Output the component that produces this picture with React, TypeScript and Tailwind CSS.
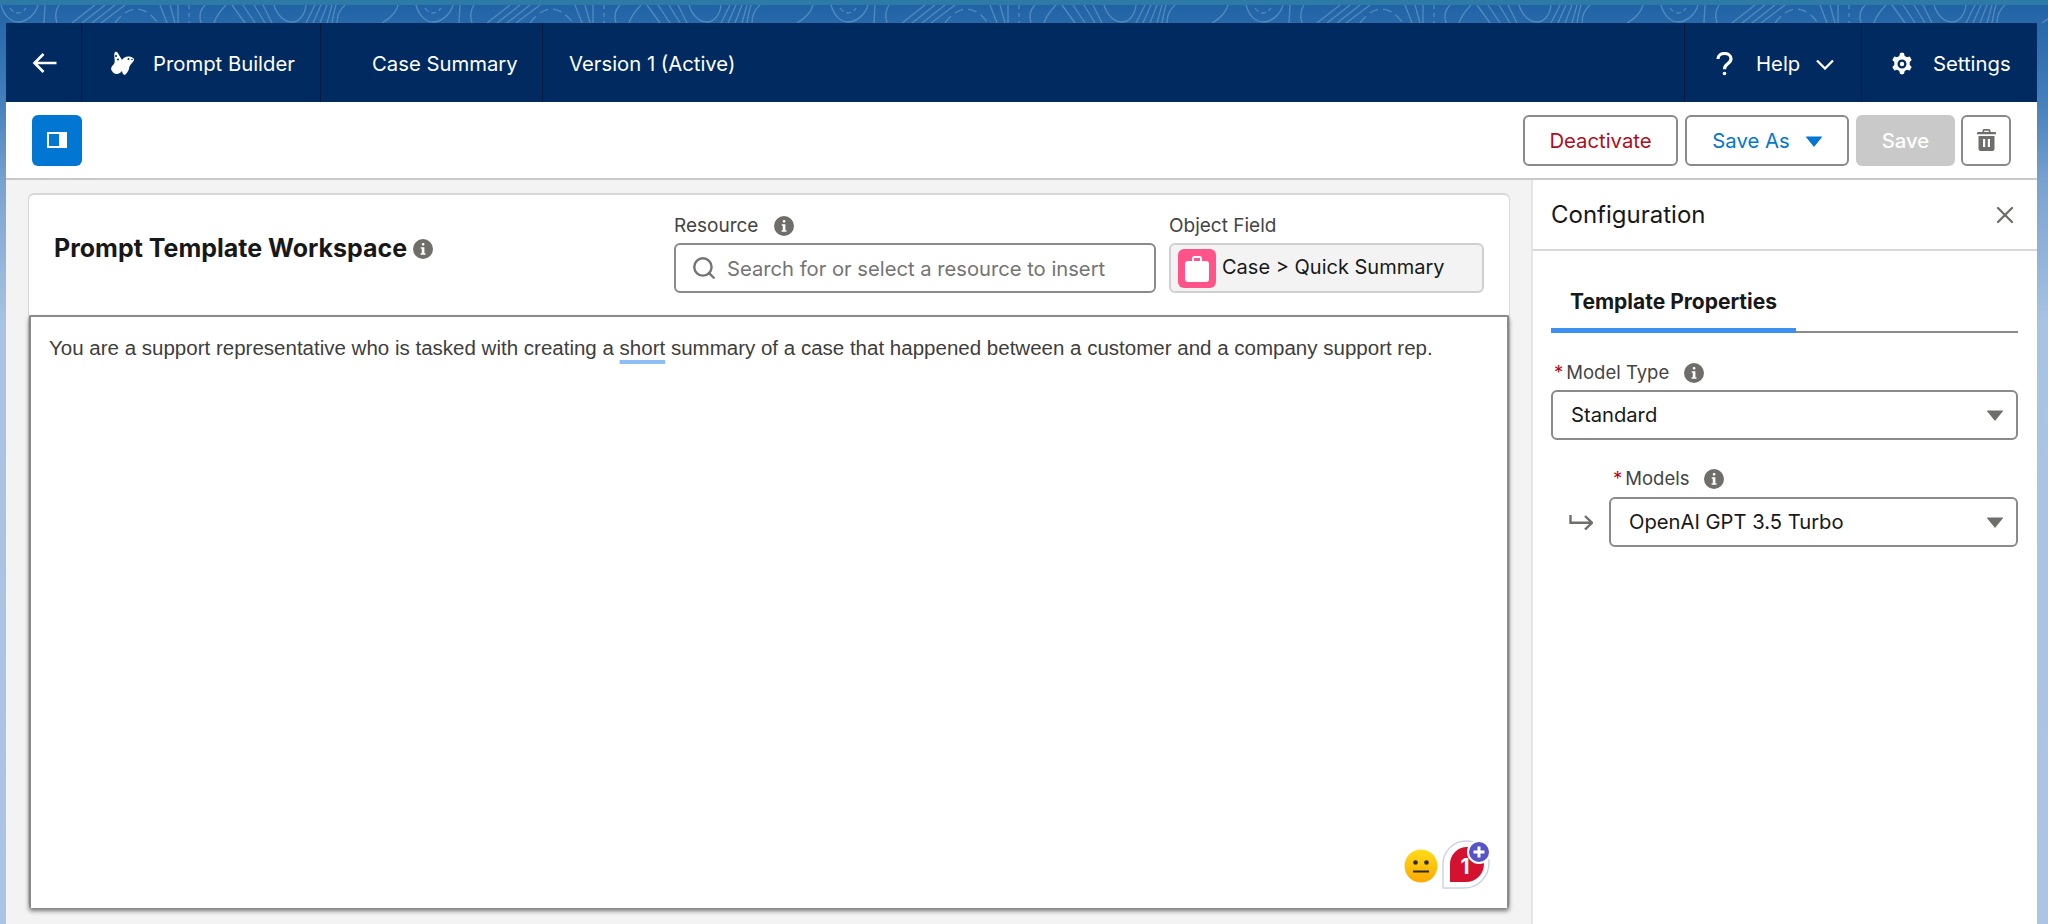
import React from 'react';
import { Search, X } from 'lucide-react';

const sans = 'font-["Inter","Noto_Sans",sans-serif]';

const InfoIcon = ({ size = 20 }: { size?: number }) => (
  <svg width={size} height={size} viewBox="0 0 20 20" className="shrink-0">
    <circle cx="10" cy="10" r="10" fill="#706e6b" />
    <rect x="8.8" y="4" width="2.6" height="2.6" rx="1" fill="#fff" />
    <path d="M7.8 8.2h3.6v6h1.1v1.6H7.6v-1.600h1.200V9.800h-1z" fill="#fff" />
  </svg>
);

const Caret = ({ color = '#706e6b' }: { color?: string }) => (
  <svg width="16" height="11" viewBox="0 0 16 11" className="shrink-0">
    <path d="M0.5 0.5h15a.5.5 0 0 1 .4.8L8.4 10.4a.5.5 0 0 1-.8 0L.1 1.3A.5.5 0 0 1 .5.5z" fill={color} />
  </svg>
);

const Butterfly = () => (
  <svg width="26" height="26" viewBox="0 0 26 26" className="shrink-0">
    <path
      d="M5 1C7 0 8 2 9 4l3 5c2-3 6-5 11-2 2 1 1 3-1 5-2 2-3 4-3 6-1 3-3 5-4 6-2 0-3-3-3-4-3 4-8 4-10 0-2-3 0-5 2-7C6 10 3 4 5 1z"
      fill="#fff"
    />
    <circle cx="6" cy="5" r="1" fill="#002a60" />
    <circle cx="8" cy="8.500" r="1" fill="#002a60" />
    <circle cx="18.500" cy="8" r="1" fill="#002a60" />
    <circle cx="22" cy="8.500" r="0.800" fill="#002a60" />
  </svg>
);

const Gear = () => (
  <svg width="24" height="24" viewBox="0 0 24 24" className="shrink-0">
    <path
      fillRule="evenodd"
      d="M12 0.500l2 .8 .7 2.700 2.300 1.300 2.700-.7 2 3.400-2 2v3l2 2-2 3.400-2.700-.7-2.300 1.300-.7 2.700-2 .8-2-.8-.7-2.700-2.300-1.300-2.700.7-2-3.400 2-2v-3l-2-2 2-3.400 2.700.7 2.300-1.300.7-2.700zM12 7.500a4.500 4.500 0 1 0 0 9 4.500 4.500 0 0 0 0-9z"
      fill="#fff"
    />
    <circle cx="12" cy="12" r="2.200" fill="#fff" />
  </svg>
);

const Trash = () => (
  <svg width="19" height="22" viewBox="0 0 19 22">
    <path
      fillRule="evenodd"
      d="M7 0h5a1.500 1.500 0 0 1 1.500 1.500V3H18a1 1 0 0 1 1 1v1.300H0V4a1 1 0 0 1 1-1h4.500V1.500A1.500 1.500 0 0 1 7 0zm.200 1.700V3h4.600V1.700zM1.500 7h16v13a2 2 0 0 1-2 2h-12a2 2 0 0 1-2-2zm4.500 3v8h2.200v-8zm4.800 0v8H13v-8z"
      fill="#706e6b"
    />
  </svg>
);

const Backdrop = () => (
  <svg className="absolute inset-0" width="2048" height="924">
    <defs>
      <linearGradient id="sky" x1="0" y1="0" x2="0" y2="1">
        <stop offset="0" stopColor="#1f62a5" />
        <stop offset="0.1" stopColor="#3f7cb9" />
        <stop offset="0.2" stopColor="#7ba3d0" />
        <stop offset="0.35" stopColor="#a9c3e2" />
        <stop offset="1" stopColor="#adc5e2" />
      </linearGradient>
      <pattern id="topo" width="415" height="60" patternUnits="userSpaceOnUse">
        <g fill="none" stroke="#5a93c4" strokeWidth="1.300" opacity="0.8">
          <path d="M1 5c3 11 10 17 17 17s17-6 20-17" />
          <path d="M10 8c2 3 5 5 8 5s6-2 8-5" strokeDasharray="5 3" />
          <path d="M45 5l-1 18M59 5c-4 6-4 12-2 18" />
          <path d="M72 23L95 5M82 23L105 5M92 23L115 5M101 23L125 5" />
          <path d="M115 23c5-7 13-14 21-14 9 0 16 6 22 14" strokeDasharray="9 5" />
          <path d="M160 5l7 18M170 5l5 18M178 5v18" />
          <path d="M189 5v18" strokeDasharray="4 4" />
          <path d="M205 5c-6 6-6 12-4 18M226 5c-5 5-10 12-12 18" />
          <path d="M232 5l13 18M243 5l12 18M254 5l11 18M263 5l9 18" />
          <path d="M274 5c3 10 10 17 18 17 7 0 13-7 14-17" />
          <path d="M306 23l9-18M313 23l8-18M320 23l7-18M327 23l5-18" />
          <path d="M345 5c-6 5-8 12-8 18M332 23c1-6 2-12 4-18" />
          <path d="M398 5c-2 8-9 14-16 18" />
        </g>
      </pattern>
    </defs>
    <rect width="2048" height="924" fill="url(#sky)" />
    <rect width="2048" height="60" fill="url(#topo)" />
    <rect width="2048" height="5" fill="#2e7aa6" />
  </svg>
);

const NavBar = () => (
  <div className={`flex h-[79px] items-stretch bg-[#002a60] text-[20.3px] text-white ${sans}`}>
    <div className="flex w-[76px] items-center border-r border-[#01183c] pl-[26px] pt-[1px]">
      <svg width="25" height="22" viewBox="0 0 25 22" fill="none" stroke="#fff" strokeWidth="2.600">
        <path d="M24.500 11H2.500M11.500 2l-9 9 9 9" />
      </svg>
    </div>
    <div className="flex w-[239px] items-center border-r border-[#01183c] pl-[28px] pt-[3px]">
      <Butterfly />
      <span className="ml-[17px]">Prompt Builder</span>
    </div>
    <div className="flex w-[222px] items-center border-r border-[#01183c] pl-[51px] pt-[3px]">Case Summary</div>
    <div className="flex flex-1 items-center pl-[26px] pt-[3px]">Version 1 (Active)</div>
    <div className="flex w-[178px] items-center border-x border-[#01183c] pl-[31px] pt-[3px]">
      <svg width="17" height="24" viewBox="0 0 17 24" fill="none" stroke="#fff" strokeWidth="3.200" className="shrink-0">
        <path d="M2 7c0-3.500 3-5.500 6.500-5.500S15 3.500 15 6.800c0 2.800-2 4-3.800 5.400-1.800 1.300-2.700 2.500-2.700 5" />
        <circle cx="8.500" cy="21.500" r="1.800" fill="#fff" stroke="none" />
      </svg>
      <span className="ml-[23px]">Help</span>
      <svg width="18" height="11" viewBox="0 0 18 11" fill="none" stroke="#fff" strokeWidth="2.300" className="ml-[16px] shrink-0">
        <path d="M1 1.500l8 8 8-8" />
      </svg>
    </div>
    <div className="flex w-[175px] items-center pl-[28px] pt-[3px]">
      <Gear />
      <span className="ml-[19px]">Settings</span>
    </div>
  </div>
);

const ToolBar = () => (
  <div className={`flex h-[78px] items-center justify-between border-b-2 border-[#c9c9c9] bg-white px-[26px] text-[20.3px] ${sans}`}>
    <button className="flex h-[51px] w-[50px] items-center justify-center rounded-[6px] bg-[#0176d3]">
      <svg width="20" height="16" viewBox="0 0 20 16">
        <rect x="1" y="1" width="18" height="14" fill="none" stroke="#fff" strokeWidth="2" />
        <rect x="12" y="1" width="7" height="14" fill="#fff" />
      </svg>
    </button>
    <div className="flex items-center gap-[7px]">
      <button className="h-[51px] w-[155px] rounded-[6px] border-2 border-[#8a8a8a] bg-white pt-[2px] font-normal text-[#ae0e22]">Deactivate</button>
      <button className="flex h-[51px] w-[164px] items-center justify-center gap-[16px] rounded-[6px] border-2 border-[#8a8a8a] bg-white pt-[2px] text-[#0176d3]">
        Save As
        <Caret color="#0176d3" />
      </button>
      <button className="h-[51px] w-[99px] rounded-[6px] bg-[#c9c9c9] pt-[2px] font-medium text-white">Save</button>
      <button className="-ml-[1px] flex h-[51px] w-[50px] items-center justify-center rounded-[6px] border-2 border-[#8a8a8a] bg-white">
        <Trash />
      </button>
    </div>
  </div>
);

const CaseIcon = () => (
  <div className="flex h-[39px] w-[38px] shrink-0 items-center justify-center rounded-[6px] bg-[#ff538a]">
    <svg width="24" height="27" viewBox="0 0 24 27">
      <path d="M8 6V3.500A1.500 1.500 0 0 1 9.500 2h5A1.500 1.500 0 0 1 16 3.500V6" fill="none" stroke="#fff" strokeWidth="2" />
      <rect y="6" width="24" height="21" rx="3" fill="#fff" />
    </svg>
  </div>
);

const WorkspaceHeader = () => (
  <div className={`flex h-[120px] items-start rounded-t-[6px] bg-white ${sans}`}>
    <div className="flex h-full flex-1 items-center gap-[6px] pb-[12px] pl-[25px]">
      <span className="text-[25px] font-bold text-[#181818]">Prompt Template Workspace</span>
      <InfoIcon />
    </div>
    <div className="mr-[13px] w-[482px] pt-[19px]">
      <div className="flex h-[24px] items-center gap-[16px] text-[19px] text-[#444444]">
        Resource
        <InfoIcon />
      </div>
      <div className="mt-[5px] flex h-[50px] items-center rounded-[6px] border-2 border-[#8a8a8a] pl-[15px] text-[20.2px] text-[#747474]">
        <Search size={26} strokeWidth={2.2} className="shrink-0" />
        <span className="ml-[10px] mt-[2px] whitespace-nowrap">Search for or select a resource to insert</span>
      </div>
    </div>
    <div className="mr-[25px] w-[315px] pt-[19px]">
      <div className="flex h-[24px] items-center text-[19px] text-[#444444]">Object Field</div>
      <div className="mt-[5px] flex h-[50px] items-center gap-[6px] rounded-[6px] border-2 border-[#d0d0d0] bg-[#f3f3f3] pl-[7px] text-[20px] text-[#181818]">
        <CaseIcon />
        <span className="mb-[2px]">Case &gt; Quick Summary</span>
      </div>
    </div>
  </div>
);

const Badges = () => (
  <div className="absolute bottom-[18px] right-[16px] flex items-end gap-[3px]">
    <svg width="34" height="34" viewBox="0 0 34 34" className="mb-[7px]">
      <defs>
        <linearGradient id="face" x1="0" y1="0" x2="0" y2="1">
          <stop offset="0" stopColor="#ffdc1a" />
          <stop offset="1" stopColor="#fca800" />
        </linearGradient>
      </defs>
      <circle cx="17" cy="17" r="16.500" fill="url(#face)" />
      <circle cx="11.500" cy="13.500" r="2.300" fill="#2b2b2b" />
      <circle cx="22.500" cy="13.500" r="2.300" fill="#2b2b2b" />
      <rect x="9" y="21.500" width="16" height="2" fill="#2b2b2b" />
    </svg>
    <svg width="50" height="50" viewBox="0 0 50 50">
      <path d="M2 48V24A23 23 0 0 1 25 1h1a22 22 0 0 1 22 22 25 25 0 0 1-25 25z" fill="#fff" stroke="#ced4e2" strokeWidth="1.500" />
      <path d="M9 42V24A17 17 0 0 1 26 7a17 17 0 0 1 17 17 18 18 0 0 1-18 18z" fill="#d4122f" />
      <text x="24" y="33.500" textAnchor="middle" fontFamily="Inter" fontWeight="700" fontSize="21" fill="#fff">1</text>
      <circle cx="38" cy="12" r="11" fill="#5754c6" stroke="#fff" strokeWidth="2" />
      <path d="M38 6.500v11M32.500 12h11" stroke="#fff" strokeWidth="3" />
    </svg>
  </div>
);

const Editor = () => (
  <div className="relative flex-1 rounded-[2px] border-x-2 border-t-2 border-[#8a8a8a] bg-white pl-[18px] pt-[19px] shadow-[0_3px_4px_rgba(0,0,0,0.5)]">
    <p className="text-[20.52px] leading-[24px] text-[#3e3e3c] font-['Liberation_Sans',sans-serif]">
      You are a support representative who is tasked with creating a{' '}
      <span className="underline decoration-[#8fbdf5] decoration-[4px] underline-offset-[5px]">short</span> summary of a case
      that happened between a customer and a company support rep.
    </p>
    <Badges />
  </div>
);

const Workspace = () => (
  <div className="flex w-[1525px] shrink-0 flex-col bg-[#f3f3f3] pb-[16px] pl-[22px] pr-[21px] pt-[13px]">
    <div className="flex flex-1 flex-col rounded-[6px] border-x border-t-2 border-[#d8d8d8]">
      <WorkspaceHeader />
      <Editor />
    </div>
  </div>
);

const SelectBox = ({ value }: { value: string }) => (
  <div className="flex h-[50px] items-center justify-between rounded-[6px] border-2 border-[#8a8a8a] bg-white pl-[18px] pr-[13px] text-[20.2px] text-[#181818]">
    {value}
    <Caret />
  </div>
);

const ConfigPanel = () => (
  <div className={`flex flex-1 flex-col border-l-2 border-[#e5e5e5] bg-white ${sans}`}>
    <div className="flex h-[71px] shrink-0 items-center justify-between border-b-2 border-[#d8d8d8] pl-[18px] pr-[18px]">
      <span className="text-[24px] text-[#181818]">Configuration</span>
      <X size={28} strokeWidth={2} className="text-[#706e6b]" />
    </div>
    <div className="pl-[18px] pr-[19px]">
      <div className="mt-[33px] flex h-[49px] items-stretch border-b-2 border-[#8a8a8a]">
        <div className="-mb-[2px] flex w-[245px] items-start border-b-[5px] border-[#3c90f0] pl-[19px] text-[21px] font-bold leading-[36px] text-[#181818]">
          Template Properties
        </div>
      </div>
      <div className="mt-[26px] flex h-[31px] items-center pb-[3px] text-[18.5px] text-[#444444]">
        <span className="ml-[3px] mr-[3px] text-[#ba0517]">*</span>Model Type
        <span className="ml-[15px]">
          <InfoIcon />
        </span>
      </div>
      <SelectBox value="Standard" />
      <div className="mt-[25px] flex">
        <div className="flex w-[58px] items-end pb-[17px] pl-[18px]">
          <svg width="24" height="16" viewBox="0 0 24 16" fill="none" stroke="#706e6b" strokeWidth="2.400">
            <path d="M1.500 1v7.800h21M16 2l7 6.800-7 6.800" />
          </svg>
        </div>
        <div className="flex-1">
          <div className="flex h-[32px] items-center pb-[4px] text-[18.5px] text-[#444444]">
            <span className="ml-[4px] mr-[3px] text-[#ba0517]">*</span>Models
            <span className="ml-[15px]">
              <InfoIcon />
            </span>
          </div>
          <SelectBox value="OpenAI GPT 3.5 Turbo" />
        </div>
      </div>
    </div>
  </div>
);

export default function App() {
  return (
    <div className="relative h-[924px] w-[2048px] overflow-hidden">
      <Backdrop />
      <div className="relative flex h-full flex-col pl-[6px] pr-[11px] pt-[23px]">
        <NavBar />
        <ToolBar />
        <div className="flex flex-1">
          <Workspace />
          <ConfigPanel />
        </div>
      </div>
    </div>
  );
}
